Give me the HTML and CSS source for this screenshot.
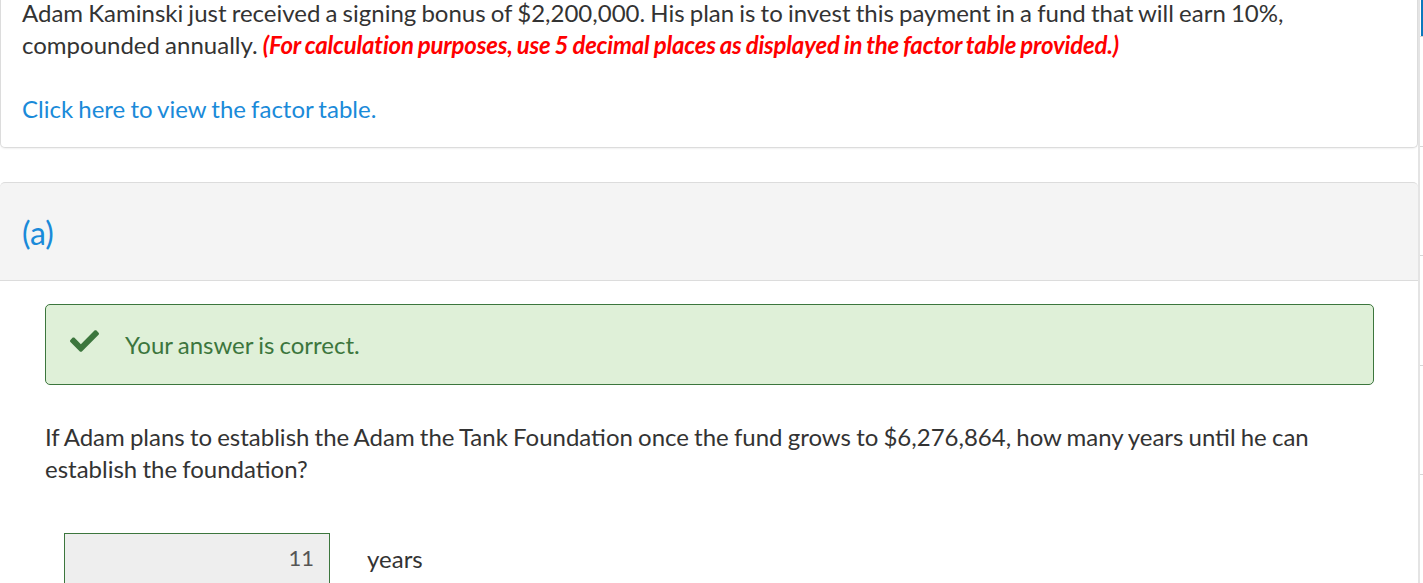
FILE: index.html
```html
<!DOCTYPE html>
<html lang="en">
<head>
<meta charset="utf-8">
<title>Question</title>
<link rel="stylesheet" href="styles.css">
</head>
<body>
<div class="page">
  <div class="main">
    <div class="intro-card">
      <p class="question-text">Adam Kaminski just received a signing bonus of $2,200,000. His plan is to invest this payment in a fund that will earn 10%, compounded annually. <em class="note">(For calculation purposes, use 5 decimal places as displayed in the factor table provided.)</em></p>
      <p class="link-line"><a class="factor-link" href="#">Click here to view the factor table.</a></p>
    </div>

    <div class="part-header">
      <span class="part-label">(a)</span>
    </div>

    <div class="part-body">
      <div class="feedback">
        <svg class="check" viewBox="0 64 512 384" aria-hidden="true"><path d="M173.898 439.404l-166.4-166.4c-9.997-9.997-9.997-26.206 0-36.204l36.203-36.204c9.997-9.998 26.207-9.998 36.204 0L192 312.69 432.095 72.596c9.997-9.997 26.207-9.997 36.204 0l36.203 36.204c9.997 9.997 9.997 26.206 0 36.204l-294.4 294.401c-9.998 9.997-26.207 9.997-36.204-.001z"/></svg>
        <span class="feedback-text">Your answer is correct.</span>
      </div>
      <p class="part-question">If Adam plans to establish the Adam the Tank Foundation once the fund grows to $6,276,864, how many years until he can establish the foundation?</p>
      <div class="answer-row">
        <div class="answer-input">11</div>
        <span class="unit">years</span>
      </div>
    </div>
  </div>
  <div class="divider"></div>
  <div class="rail"><div class="rail-bar"></div></div>
</div>
</body>
</html>
```

FILE: styles.css
```css
html, body {
  margin: 0;
  padding: 0;
  background: #fff;
  overflow: hidden;
}
body {
  font-family: Lato, "Open Sans", "Liberation Sans", sans-serif;
  font-size: 24px;
  line-height: 32px;
  color: #333;
  word-spacing: -1px;
}
.page {
  display: flex;
  width: 1423px;
  height: 583px;
  overflow: hidden;
}
.main {
  width: 1418px;
  flex: none;
}
.divider {
  width: 2px;
  flex: none;
  background: #e4e4e4;
}
.rail {
  width: 3px;
  flex: none;
  padding-left: 1px;
  box-sizing: border-box;
  background-image: repeating-linear-gradient(to bottom, transparent 0px, transparent 36px, #d6d6d6 36px, #d6d6d6 37px, transparent 37px, transparent 109.6px);
}
.rail-bar {
  width: 2px;
  height: 36px;
  background: #0b78bd;
}
.intro-card {
  margin-top: -3px;
  border: 1px solid #dcdcdc;
  border-top: none;
  border-radius: 0 0 5px 5px;
  box-shadow: 0 1px 2px rgba(0,0,0,0.06);
  padding: 0 21px 22px 21px;
  background: #fff;
}
.question-text {
  margin: 0;
}
.note {
  color: #ff0000;
  font-weight: 700;
  font-style: italic;
  letter-spacing: -0.2px;
}
.link-line {
  margin: 32px 0 0 0;
}
.factor-link {
  color: #1a8ad9;
  text-decoration: none;
}
.part-header {
  margin-top: 34px;
  background: #f4f4f4;
  border-top: 1px solid #dcdcdc;
  border-bottom: 1px solid #dcdcdc;
  border-radius: 5px 5px 0 0;
  display: flex;
  align-items: center;
  padding: 2px 22px 0 22px;
  box-sizing: border-box;
  height: 99px;
}
.part-label {
  color: #1a8ad9;
  font-size: 32px;
}
.part-body {
  padding: 23px 44px 0 45px;
}
.feedback {
  height: 81px;
  box-sizing: border-box;
  border: 1px solid #3c763d;
  border-radius: 5px;
  background: #dff0d8;
  display: flex;
  align-items: center;
  padding-left: 24px;
}
.check {
  width: 29px;
  height: 22px;
  fill: #3c763d;
  margin-top: -8px;
}
.feedback-text {
  color: #3c763d;
  margin-left: 26px;
}
.part-question {
  margin: 36px 0 0 0;
}
.answer-row {
  margin-top: 48px;
  padding-left: 19px;
  display: flex;
  align-items: center;
}
.answer-input {
  width: 266px;
  height: 52px;
  box-sizing: border-box;
  border: 1px solid #3c763d;
  background: #eeeeee;
  color: #555;
  text-align: right;
  padding-right: 15px;
  line-height: 48px;
  font-size: 22px;
}
.unit {
  margin-left: 37px;
}
```
